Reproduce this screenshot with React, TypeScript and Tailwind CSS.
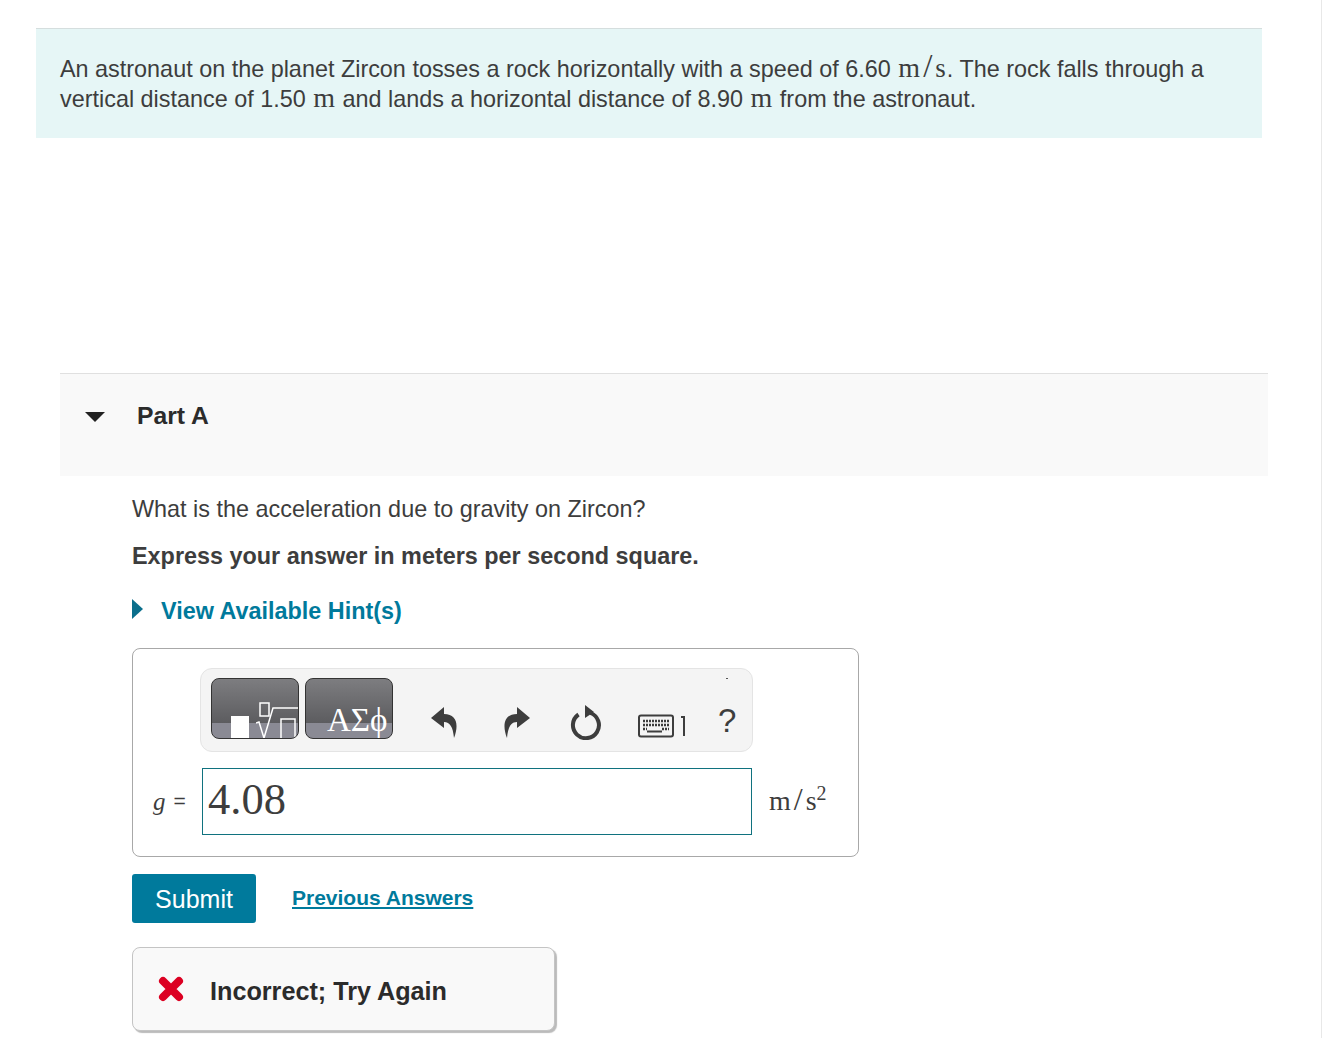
const serif = "font-['Liberation_Serif',serif]";

// the "m" and "m/s" units are set in a wider serif than the body text
function Unit({ s }: { s?: boolean }) {
  return (
    <span className={`${serif} mx-[1px] text-[28px] leading-[0]`}>
      m
      {s && (
        <>
          <span className="mx-[3px] text-[33px] font-light leading-[0]">/</span>
          <span className="text-[27px] leading-[0]">s</span>
        </>
      )}
    </span>
  );
}

function ToolButton({ children }: { children: React.ReactNode }) {
  return (
    <div className="relative h-[61px] overflow-hidden rounded-lg border border-[#333] bg-[linear-gradient(#7d7d80,#5c5c5f_75%,#8a8a94_75%,#8a8a94)]">
      {children}
    </div>
  );
}

function UndoIcon({ flip }: { flip?: boolean }) {
  return (
    <svg width="26" height="31" viewBox="0 0 26 31" className={flip ? "-scale-x-100" : ""}>
      <path d="M13 0 L0 11 L13 21 L13 15 C19 15 22 20 23 31 C28 18 26 7 13 7 Z" fill="#3d3d3d" />
    </svg>
  );
}

function KeyboardIcon() {
  return (
    <svg width="36" height="24" viewBox="0 0 36 24" fill="none">
      <rect x="1" y="1.5" width="34" height="21" rx="2" stroke="#3d3d3d" strokeWidth="2" />
      <path d="M5 7h26" stroke="#3d3d3d" strokeWidth="2.4" strokeDasharray="2 1" />
      <path d="M5 11h26" stroke="#3d3d3d" strokeWidth="2.4" strokeDasharray="2 1" />
      <path d="M5 15h4M24 15h7" stroke="#3d3d3d" strokeWidth="2.4" strokeDasharray="2 1" />
      <path d="M9 17.5h15" stroke="#3d3d3d" strokeWidth="2" />
    </svg>
  );
}

export default function App() {
  return (
    <div className="h-[1038px] w-[1322px] overflow-hidden border-r border-[#e8e8e8] bg-white pt-7 font-['Liberation_Sans',sans-serif] text-[#3d3d3d]">
      <div className="ml-9 h-[110px] w-[1226px] border-t border-[#d5dede] bg-[#e6f6f6] px-6 pt-[25px] text-[23.4px] leading-[30px]">
        <p className="h-[30px] whitespace-nowrap">
          An astronaut on the planet Zircon tosses a rock horizontally with a speed of 6.60 <Unit s />. The rock falls through a
        </p>
        <p className="h-[30px] whitespace-nowrap">
          vertical distance of 1.50 <Unit /> and lands a horizontal distance of 8.90 <Unit /> from the astronaut.
        </p>
      </div>

      <div className="ml-[60px] mt-[235px] flex h-[103px] w-[1208px] items-start border-t border-[#e0e0e0] bg-[#f9f9f9] pl-[25px] pt-[27px]">
        <div className="mt-[11px] h-0 w-0 border-x-[10px] border-t-[10px] border-x-transparent border-t-[#222]" />
        <h2 className="ml-[32px] text-[24.7px] font-bold leading-[30px] text-[#2b2b2b]">Part A</h2>
      </div>

      <div className="ml-[132px] w-[1000px]">
        <p className="mt-[18px] text-[23.4px] leading-[30px]">What is the acceleration due to gravity on Zircon?</p>
        <p className="mt-[17px] text-[23.4px] font-bold leading-[30px]">Express your answer in meters per second square.</p>

        <div className="mt-[25px] flex h-[30px] items-center text-[#007a9c]">
          <div className="mt-[-5px] h-0 w-0 border-y-[10px] border-l-[11px] border-y-transparent border-l-[#0b6f8c]" />
          <span className="ml-[18px] text-[23.4px] font-bold leading-[30px]">View Available Hint(s)</span>
        </div>

        <div className="mt-[22px] h-[209px] w-[727px] rounded-lg border border-[#a8a8a8] bg-white pl-[67px] pt-[19px]">
          <div className="relative flex h-[84px] w-[553px] items-end rounded-xl border border-[#e4e4e4] bg-[#f4f4f4] pb-[12px] pl-[10px]">
            <div className="absolute left-[525px] top-[9px] h-px w-[2px] bg-[#555]" />
            <div className="w-[88px]">
              <ToolButton>
                <div className="absolute bottom-0 left-[19px] h-[22px] w-[18px] bg-white" />
                <svg className="absolute left-[44px] top-[23px]" width="42" height="37" viewBox="0 0 42 37" fill="none" stroke="#fff" strokeWidth="1.5">
                  <rect x="4" y="1" width="9" height="13" />
                  <path d="M0 21l3-1 5 16 9-30h25" />
                  <path d="M25 37V17h14v20" />
                </svg>
              </ToolButton>
            </div>
            <div className="ml-[6px] w-[88px]">
              <ToolButton>
                <span className={`absolute bottom-0 left-[21px] ${serif} text-[33px] leading-[36px] text-white`}>ΑΣϕ</span>
              </ToolButton>
            </div>
            <div className="ml-[38px] mb-[1px]"><UndoIcon /></div>
            <div className="ml-[47px] mb-[1px]"><UndoIcon flip /></div>
            <div className="ml-[40px] mb-[-1px]">
              <svg width="32" height="36" viewBox="0 0 32 36" fill="none">
                <path d="M8.5 10.5 A13 13 0 1 0 20.5 9" stroke="#3d3d3d" strokeWidth="4" />
                <path d="M15 1 L24 8 L15 14 Z" fill="#3d3d3d" />
              </svg>
            </div>
            <div className="ml-[36px] mb-[1px] flex items-center">
              <KeyboardIcon />
              <div className="ml-[7px] h-[20px] w-[4px] border-r-2 border-t-2 border-[#3d3d3d]" />
            </div>
            <span className="ml-[33px] mb-0 text-[33px] leading-[36px]">?</span>
          </div>

          <div className="relative mt-4 flex items-center">
            <div className="absolute left-[-47px] flex items-center">
              <span className={`${serif} text-[25px] italic leading-none`}>g</span>
              <span className="mb-[2px] ml-[8px] text-[21px] leading-none">=</span>
            </div>
            <div className={`ml-[2px] h-[67px] w-[550px] border border-[#10727f] pl-[5px] ${serif} text-[44.5px] leading-[60px]`}>4.08</div>
            <span className={`mb-[6px] ml-[17px] whitespace-nowrap ${serif} text-[28px] leading-none`}>
              m<span className="mx-[3px] text-[32px] font-light">/</span>s<sup className="text-[20px]">2</sup>
            </span>
          </div>
        </div>

        <div className="mt-[17px] flex items-center">
          <button className="h-[49px] w-[124px] rounded-[3px] bg-[#007a9c] pt-[2px] text-[25px] text-white">Submit</button>
          <a className="mb-[2px] ml-[36px] text-[21px] font-bold text-[#007a9c] underline">Previous Answers</a>
        </div>

        <div className="mt-[24px] flex h-[84px] w-[423px] items-center rounded-lg border border-[#c4c4c4] bg-[#f9f9f9] pl-[25px] shadow-[2px_2px_1px_#bbb]">
          <svg width="26" height="26" viewBox="0 0 26 26">
            <path d="M5 5 L21 21 M21 5 L5 21" stroke="#dc0022" strokeWidth="8" strokeLinecap="round" />
          </svg>
          <span className="ml-[26px] mt-[5px] text-[25.2px] font-bold text-[#2b2b2b]">Incorrect; Try Again</span>
        </div>
      </div>
    </div>
  );
}
